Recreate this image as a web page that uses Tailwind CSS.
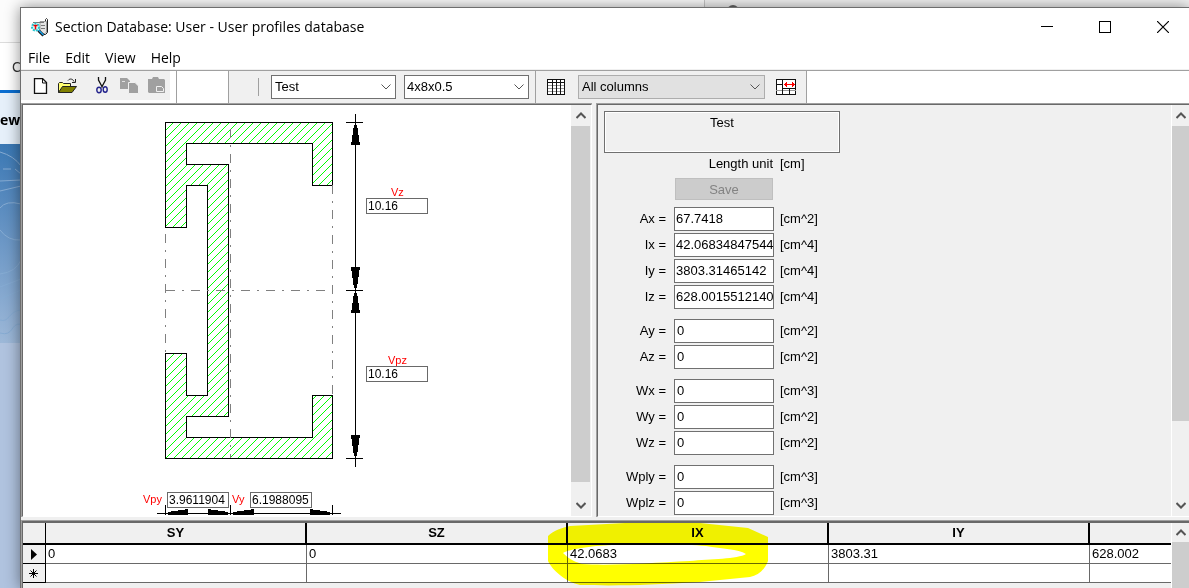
<!DOCTYPE html>
<html lang="en">

<head>
    <meta charset="UTF-8">
    <title>Section Database</title>
    <!-- Tailwind CSS CDN -->
    <script src="https://cdn.jsdelivr.net/npm/@tailwindcss/browser@4"></script>
</head>

<body class="relative h-screen overflow-hidden bg-[#f3f3f3] font-['Liberation_Sans',Arial,sans-serif] text-[13px] leading-4 text-black">

    <!-- Page behind the window -->
    <div class="absolute inset-0 flex flex-col" aria-hidden="true">
        <div class="flex h-[43px] border-b border-[#dcdcdc] bg-[#fcfcfc]">
            <div class="w-[705px] border-r border-[#c8c8c8]"></div>
            <div class="flex-1 bg-[#f3f3f3] pl-[22px]">
                <svg class="mt-[5px] h-3 w-3" viewBox="0 0 12 12" fill="none" stroke="#666" stroke-width="2"><circle cx="6" cy="6" r="5" /></svg>
            </div>
        </div>
        <div class="flex h-[47px] items-center bg-white pl-3 text-sm text-[#333]">C</div>
        <div class="h-[54px] border-t-3 border-[#0a6ed1] bg-[#e6f0fa] pt-[19px] font-['Open_Sans',sans-serif] text-sm font-bold leading-4">ew</div>
        <div class="h-[199px] bg-linear-to-b from-[#3a78b4] to-[#9db8d8]">
            <svg class="h-full w-[21px]" viewBox="0 0 21 199" fill="none" stroke="#86abd2" stroke-width="1">
                <path d="M0 8Q14 12 21 22M3 25h8M15 25l6 5M0 37l21-1M0 47l21-5M21 60Q6 56 0 64M0 86Q8 97 21 96M0 130Q16 128 21 116M0 143l21-8M0 155l21-9M0 176c10 3 8-9 21-10M0 189c14 4 10-10 21-9" />
            </svg>
        </div>
        <div class="flex-1 bg-[#b0c3df]"></div>
    </div>

    <!-- Window -->
    <div class="relative mt-[7px] ml-5 flex h-[calc(100vh-7px)] flex-col border-t border-l border-[#6e6e6e] bg-white shadow-[0_0_14px_rgba(0,0,0,0.45)]">

        <!-- Title bar -->
        <header class="flex h-[38px] shrink-0 items-center pl-[10px] font-['Open_Sans',sans-serif] text-sm">
            <svg class="mr-[5px] h-[19px] w-[19px]" viewBox="0 0 19 19" fill="none">
                <path d="M9 3.5h6.500v11l-2 1H9z" fill="#e4e4e4" stroke="#999" />
                <path d="M2 4.500h11M10 7.500h4M10 10.500h4" stroke="#777" />
                <path d="M14.500 3V1.500l1-1 1 1v13l-2 2H10" stroke="#222" />
                <circle cx="4.500" cy="9" r="3.500" fill="#c8ffff" stroke="#25c4cc" stroke-width="2" stroke-dasharray="2 1" />
                <path d="M2.500 7.500h4M4.500 7.500v4" stroke="#e00" stroke-width="1.500" />
                <path d="M7.500 12.500l5 5" stroke="#111" stroke-width="3" />
                <path d="M7.500 12l5 5" stroke="#18a0e8" stroke-width="1.500" />
            </svg>
            <h1 class="flex-1 whitespace-nowrap">Section Database: User - User profiles database</h1>
            <div class="flex">
                <button aria-label="Minimize" class="flex h-8 w-[58px] items-center justify-center">
                    <svg class="h-3 w-3" viewBox="0 0 12 12" stroke="#000" shape-rendering="crispEdges"><path d="M0 5.500h12" /></svg>
                </button>
                <button aria-label="Maximize" class="flex h-8 w-[58px] items-center justify-center">
                    <svg class="h-3 w-3" viewBox="0 0 12 12" fill="none" stroke="#000" shape-rendering="crispEdges"><path d="M.5.5h11v11H.5z" /></svg>
                </button>
                <button aria-label="Close" class="mr-[-3px] flex h-8 w-[58px] items-center justify-center">
                    <svg class="h-3 w-3" viewBox="0 0 12 12" stroke="#000" stroke-width="1.200"><path d="M0 0l12 12M12 0L0 12" /></svg>
                </button>
            </div>
        </header>

        <!-- Menu -->
        <nav class="flex h-6 shrink-0 items-center gap-[15px] border-b border-[#f0f0f0] pl-[7px] font-['Open_Sans',sans-serif] text-sm">
            <a href="#">File</a>
            <a href="#">Edit</a>
            <a href="#">View</a>
            <a href="#">Help</a>
        </nav>

        <!-- Toolbar -->
        <div class="flex h-[33px] shrink-0 border-t border-[#a0a0a0]">
            <div class="w-[155px] shrink-0">
                <div class="flex h-[29px] w-[149px] items-center bg-[#f0f0f0] pl-3">
                    <button aria-label="New">
                        <svg class="h-4 w-4" viewBox="0 0 16 16"><path d="M1.500.5h8l4 4v11h-12z" fill="#fff" stroke="#111" stroke-width="1.300" /><path d="M9.500 1v4H14" fill="none" stroke="#111" /></svg>
                    </button>
                    <button aria-label="Open" class="ml-2">
                        <svg class="h-4 w-5" viewBox="0 0 20 16" stroke="#222">
                            <path d="M1.500 14.500v-9l1-1h3l1 1h7v3" fill="#ffff70" />
                            <path d="M1.500 14.500l4-6h14l-4.500 6z" fill="#808000" />
                            <path d="M11 2.500c2-2.500 5-1.500 6 1M18.500 1v3.500H15" fill="none" />
                        </svg>
                    </button>
                    <button aria-label="Cut" class="ml-[19px]">
                        <svg class="h-[17px] w-3" viewBox="0 0 12 17" fill="none">
                            <path d="M2.500 0v3l4 7.500M9.500 0v3l-4 7.500" stroke="#111" stroke-width="1.300" />
                            <ellipse cx="3" cy="13" rx="2.200" ry="2.800" stroke="#22228c" stroke-width="1.400" />
                            <ellipse cx="9.200" cy="12.500" rx="2" ry="2.800" stroke="#22228c" stroke-width="1.400" />
                        </svg>
                    </button>
                    <button aria-label="Copy" disabled class="ml-3">
                        <svg class="h-4 w-[19px]" viewBox="0 0 19 16" fill="#a0a0a0"><path d="M0 0h7l3 3v8H0z" /><path d="M8.500 4.500h6.500l3.500 3.500v7.500h-10z" stroke="#f0f0f0" /><path d="M2 3.500h3" stroke="#e0e0e0" /></svg>
                    </button>
                    <button aria-label="Paste" disabled class="ml-2">
                        <svg class="h-[17px] w-[19px]" viewBox="0 0 19 17" fill="#a0a0a0"><path d="M1 2h4l1-2h5l1 2h5l1 1v13H2l-1-1z" /><path d="M9.500 9.500h5l2 2v3h-7z" stroke="#f0f0f0" /></svg>
                    </button>
                </div>
            </div>
            <div class="w-[52px] shrink-0 border-l border-[#a0a0a0]"></div>
            <div class="flex w-[307px] shrink-0 items-center border-l border-[#a0a0a0] bg-[#f0f0f0]">
                <div class="ml-[29px] h-[18px] w-px bg-[#a0a0a0]"></div>
                <div class="relative ml-3">
                    <select aria-label="Database" class="h-6 w-[125px] appearance-none border border-[#707070] bg-white pl-[3px]">
                        <option>Test</option>
                    </select>
                    <svg class="pointer-events-none absolute top-[9px] right-[5px] h-[6px] w-[10px]" viewBox="0 0 10 6" fill="none" stroke="#555"><path d="M.5.5L5 5 9.500.5" /></svg>
                </div>
                <div class="relative ml-2">
                    <select aria-label="Section" class="h-6 w-[125px] appearance-none border border-[#707070] bg-white pl-[2px]">
                        <option>4x8x0.5</option>
                    </select>
                    <svg class="pointer-events-none absolute top-[9px] right-[5px] h-[6px] w-[10px]" viewBox="0 0 10 6" fill="none" stroke="#555"><path d="M.5.5L5 5 9.500.5" /></svg>
                </div>
            </div>
            <div class="flex w-[272px] shrink-0 items-center border-x border-[#a0a0a0] bg-[#f0f0f0]">
                <button aria-label="Columns" class="ml-[11px]">
                    <svg class="h-4 w-[18px]" viewBox="0 0 18 16" fill="#fff" stroke="#111" shape-rendering="crispEdges"><path d="M.5.5h17v15H.5z" /><path d="M1 6.500h16M1 9.500h16M1 12.500h16" stroke="#999" /><path d="M0 3.500h18M5.500 0v16M9.500 0v16M13.500 0v16" /></svg>
                </button>
                <div class="relative ml-[13px]">
                    <select aria-label="Column set" class="h-6 w-[187px] appearance-none border border-[#adadad] bg-[#e1e1e1] pl-[3px]">
                        <option>All columns</option>
                    </select>
                    <svg class="pointer-events-none absolute top-[9px] right-[5px] h-[6px] w-[10px]" viewBox="0 0 10 6" fill="none" stroke="#555"><path d="M.5.5L5 5 9.500.5" /></svg>
                </div>
                <button aria-label="Fit column width" class="ml-[11px]">
                    <svg class="h-4 w-5" viewBox="0 0 20 16" fill="#fff" stroke="#111" shape-rendering="crispEdges">
                        <path d="M.5.5h19v15H.5z" /><path d="M0 11.500h20" stroke="#999" /><path d="M0 5.500h7M6.500 0v16M13.500 10v6M7 9.500h12" />
                        <path d="M8 5.500h11M10.500 3v5M16.500 3v5M9.500 4v3M17.500 4v3" stroke="#f00" />
                    </svg>
                </button>
            </div>
        </div>

        <!-- Panes -->
        <main class="flex min-h-0 flex-1 bg-[#f0f0f0]">

            <!-- Section drawing -->
            <section class="w-[571px] shrink-0 border-t border-l border-[#a0a0a0]">
                <div class="flex h-full border-t border-r border-b border-l border-t-[#696969] border-r-white border-b-white border-l-[#696969]">
                    <div class="relative flex-1 overflow-hidden bg-white">
                        <svg class="absolute top-0 left-0 h-[411px] w-[548px]" viewBox="23 105 548 411" fill="none" shape-rendering="crispEdges">
                            <defs>
                                <pattern id="hatch" width="8" height="8" patternUnits="userSpaceOnUse">
                                    <path d="M-1 9L9-1" stroke="#00ff00" stroke-width="1" />
                                </pattern>
                            </defs>
                            <path d="M165.500 122.500H332.500V185.500H312.500V143.500H186.500V164.500H228.500V416.500H186.500V437.500H312.500V395.500H332.500V458.500H165.500V353.500H186.500V395.500H207.500V185.500H186.500V227.500H165.500z" fill="url(#hatch)" stroke="#000" />
                            <path d="M165.500 234V353M332.500 185V395M230.500 129V458M166 290.500H332" stroke="#808080" stroke-dasharray="9 7 2 7" />
                            <!-- dimension lines -->
                            <g stroke="#000">
                                <path d="M355.500 114V467M346 122.500h17M346 290.500h17M346 458.500h17" />
                                <path d="M157 513.500h184M165.500 505v10M230.500 505v10M332.500 505v10" />
                            </g>
                            <g fill="#000">
                                <path d="M354 125h3l3 20h-9zM354 288h3l3-21h-9zM354 293h3l3 20h-9zM354 456h3l3-21h-9z" />
                                <path d="M168 512l20-3v6h-20zM228 512l-20-3v6h20zM233 512l21-3v6h-21zM330 512l-20-3v6h20z" />
                            </g>
                        </svg>
                        <label for="vz" class="absolute top-[79px] left-[368px] text-[11px] text-[#f00]">Vz</label>
                        <input id="vz" value="10.16" class="absolute top-[93px] left-[343px] h-4 w-[62px] border border-[#696969] bg-white px-px text-xs">
                        <label for="vpz" class="absolute top-[247px] left-[365px] text-[11px] text-[#f00]">Vpz</label>
                        <input id="vpz" value="10.16" class="absolute top-[261px] left-[343px] h-4 w-[62px] border border-[#696969] bg-white px-px text-xs">
                        <label for="vpy" class="absolute top-[386px] left-[120px] text-[11px] text-[#f00]">Vpy</label>
                        <input id="vpy" value="3.9611904" class="absolute top-[387px] left-[144px] h-4 w-[62px] border border-[#696969] bg-white px-px text-xs">
                        <label for="vy" class="absolute top-[386px] left-[209px] text-[11px] text-[#f00]">Vy</label>
                        <input id="vy" value="6.1988095" class="absolute top-[387px] left-[227px] h-4 w-[62px] border border-[#696969] bg-white px-px text-xs">
                    </div>
                    <div class="flex w-5 flex-col items-center bg-[#f0f0f0] pr-px">
                        <button aria-label="Scroll up" class="flex h-[21px] items-center"><svg class="h-[7px] w-[10px]" viewBox="0 0 10 7" fill="none" stroke="#555" stroke-width="2"><path d="M.5 6L5 1.500 9.500 6" /></svg></button>
                        <div class="mb-3 w-full flex-1 bg-[#cdcdcd]"></div>
                        <button aria-label="Scroll down" class="flex h-[22px] items-center"><svg class="h-[7px] w-[10px]" viewBox="0 0 10 7" fill="none" stroke="#555" stroke-width="2"><path d="M.5 1L5 5.500 9.500 1" /></svg></button>
                    </div>
                </div>
            </section>

            <!-- Properties -->
            <section class="ml-1 min-w-0 flex-1 border-t border-l border-[#a0a0a0]">
                <div class="flex h-full border-t border-b border-l border-t-[#696969] border-b-white border-l-[#696969]">
                    <form class="min-w-0 flex-1 overflow-hidden pt-[6px] pl-[6px]">
                        <div class="h-[42px] w-[236px] border border-[#707070] pt-[3px] text-center shadow-[inset_0_0_0_1px_#fff]">Test</div>
                        <div class="flex h-5 items-center pt-px">
                            <span class="w-[169px] text-right">Length unit</span>
                            <span class="ml-[7px]">[cm]</span>
                        </div>
                        <button type="button" disabled class="mt-[5px] ml-[71px] block h-[22px] w-[98px] border border-[#bfbfbf] bg-[#cccccc] pt-px text-[#838383]">Save</button>

                        <div class="mt-[7px] flex flex-col gap-[10px]">
                            <div class="grid grid-cols-[70px_106px_1fr] items-center gap-y-[2px]">
                                <label for="ax" class="pr-2 text-right">Ax =</label><input id="ax" value="67.7418" class="h-6 w-[100px] border border-[#707070] bg-white pr-0 pb-[2px] pl-px"><span>[cm^2]</span>
                                <label for="ix" class="pr-2 text-right">Ix =</label><input id="ix" value="42.06834847544" class="h-6 w-[100px] border border-[#707070] bg-white pr-0 pb-[2px] pl-px"><span>[cm^4]</span>
                                <label for="iy" class="pr-2 text-right">Iy =</label><input id="iy" value="3803.31465142" class="h-6 w-[100px] border border-[#707070] bg-white pr-0 pb-[2px] pl-px"><span>[cm^4]</span>
                                <label for="iz" class="pr-2 text-right">Iz =</label><input id="iz" value="628.0015512140" class="h-6 w-[100px] border border-[#707070] bg-white pr-0 pb-[2px] pl-px"><span>[cm^4]</span>
                            </div>
                            <div class="grid grid-cols-[70px_106px_1fr] items-center gap-y-[2px]">
                                <label for="ay" class="pr-2 text-right">Ay =</label><input id="ay" value="0" class="h-6 w-[100px] border border-[#707070] bg-white px-[2px] pb-[2px]"><span>[cm^2]</span>
                                <label for="az" class="pr-2 text-right">Az =</label><input id="az" value="0" class="h-6 w-[100px] border border-[#707070] bg-white px-[2px] pb-[2px]"><span>[cm^2]</span>
                            </div>
                            <div class="grid grid-cols-[70px_106px_1fr] items-center gap-y-[2px]">
                                <label for="wx" class="pr-2 text-right">Wx =</label><input id="wx" value="0" class="h-6 w-[100px] border border-[#707070] bg-white px-[2px] pb-[2px]"><span>[cm^3]</span>
                                <label for="wy" class="pr-2 text-right">Wy =</label><input id="wy" value="0" class="h-6 w-[100px] border border-[#707070] bg-white px-[2px] pb-[2px]"><span>[cm^2]</span>
                                <label for="wz" class="pr-2 text-right">Wz =</label><input id="wz" value="0" class="h-6 w-[100px] border border-[#707070] bg-white px-[2px] pb-[2px]"><span>[cm^2]</span>
                            </div>
                            <div class="grid grid-cols-[70px_106px_1fr] items-center gap-y-[2px]">
                                <label for="wply" class="pr-2 text-right">Wply =</label><input id="wply" value="0" class="h-6 w-[100px] border border-[#707070] bg-white px-[2px] pb-[2px]"><span>[cm^3]</span>
                                <label for="wplz" class="pr-2 text-right">Wplz =</label><input id="wplz" value="0" class="h-6 w-[100px] border border-[#707070] bg-white px-[2px] pb-[2px]"><span>[cm^3]</span>
                            </div>
                        </div>
                    </form>
                    <div class="flex w-[18px] flex-col items-center border-l border-white bg-[#f0f0f0]">
                        <button aria-label="Scroll up" class="flex h-[21px] items-center"><svg class="h-[7px] w-[10px]" viewBox="0 0 10 7" fill="none" stroke="#555" stroke-width="2"><path d="M.5 6L5 1.500 9.500 6" /></svg></button>
                        <div class="mb-[73px] w-full flex-1 bg-[#cdcdcd]"></div>
                        <button aria-label="Scroll down" class="flex h-[22px] items-center"><svg class="h-[7px] w-[10px]" viewBox="0 0 10 7" fill="none" stroke="#555" stroke-width="2"><path d="M.5 1L5 5.500 9.500 1" /></svg></button>
                    </div>
                </div>
            </section>
        </main>

        <!-- Data grid -->
        <section class="h-[71px] shrink-0 bg-[#f0f0f0] pt-[3px]">
            <div class="h-full border-t border-l border-[#a0a0a0]">
                <div class="flex h-full border-t-2 border-l border-[#696969]">
                    <div class="relative min-w-0 flex-1 overflow-hidden">
                        <table class="w-[1328px] table-fixed border-separate border-spacing-0 text-left">
                            <colgroup>
                                <col class="w-[23px]"><col class="w-[261px]"><col class="w-[261px]"><col class="w-[261px]"><col class="w-[261px]"><col class="w-[261px]">
                            </colgroup>
                            <thead>
                                <tr class="h-[22px] bg-[#f0f0f0] text-center">
                                    <th class="border-r border-b-2 border-black p-0"></th>
                                    <th class="border-r-2 border-b-2 border-black p-0">SY</th>
                                    <th class="border-r-2 border-b-2 border-black p-0">SZ</th>
                                    <th class="border-r-2 border-b-2 border-black p-0">IX</th>
                                    <th class="border-r-2 border-b-2 border-black p-0">IY</th>
                                    <th class="border-b-2 border-black p-0"></th>
                                </tr>
                            </thead>
                            <tbody>
                                <tr class="h-[19px] bg-white">
                                    <th class="border-r border-b border-black bg-[#f0f0f0] p-0"><svg class="ml-2 h-[11px] w-[6px]" viewBox="0 0 6 11"><path d="M0 0l6 5.500L0 11z" /></svg></th>
                                    <td class="border-r border-b border-[#696969] py-0 pr-0 pl-[2px]">0</td>
                                    <td class="border-r border-b border-[#696969] py-0 pr-0 pl-[2px]">0</td>
                                    <td class="border-r border-b border-[#696969] py-0 pr-0 pl-[2px]">42.0683</td>
                                    <td class="border-r border-b border-[#696969] py-0 pr-0 pl-[2px]">3803.31</td>
                                    <td class="border-b border-[#696969] py-0 pr-0 pl-[2px]">628.002</td>
                                </tr>
                                <tr class="h-[19px] bg-white">
                                    <th class="border-r border-b border-black bg-[#f0f0f0] p-0"><svg class="ml-[6px] h-[9px] w-[9px]" viewBox="0 0 9 9" stroke="#000"><path d="M4.500 0v9M0 4.500h9M1.500 1.500l6 6M7.500 1.500l-6 6" /></svg></th>
                                    <td class="border-r border-b border-[#696969] p-0"></td>
                                    <td class="border-r border-b border-[#696969] p-0"></td>
                                    <td class="border-r border-b border-[#696969] p-0"></td>
                                    <td class="border-r border-b border-[#696969] p-0"></td>
                                    <td class="border-b border-[#696969] p-0"></td>
                                </tr>
                            </tbody>
                        </table>
                        <!-- marker highlight around IX -->
                        <svg class="pointer-events-none absolute top-0 left-[525px] h-[66px] w-[220px] mix-blend-multiply" viewBox="548 523 220 66">
                            <path fill="#ff0" fill-rule="evenodd" d="M548 536C554 530 562 528 570 526L625 523C645 521 680 522 700 523L748 528L768 537V561C764 571 758 575 750 577L700 582C650 585 620 586 580 585C566 582 552 570 548 561zM563 553C570 549 590 546 612 545C650 543 690 544 706 546C722 549 738 549 746 554C738 559 710 559 690 561C650 563 610 566 582 564C572 561 568 558 563 553z" />
                        </svg>
                    </div>
                    <div class="flex w-[18px] flex-col items-center border-l border-white bg-[#f0f0f0]">
                        <button aria-label="Scroll up" class="flex h-[19px] items-center"><svg class="h-[7px] w-[10px]" viewBox="0 0 10 7" fill="none" stroke="#555" stroke-width="2"><path d="M.5 6L5 1.500 9.500 6" /></svg></button>
                        <div class="w-full flex-1 bg-[#cdcdcd]"></div>
                    </div>
                </div>
            </div>
        </section>
    </div>
</body>

</html>
